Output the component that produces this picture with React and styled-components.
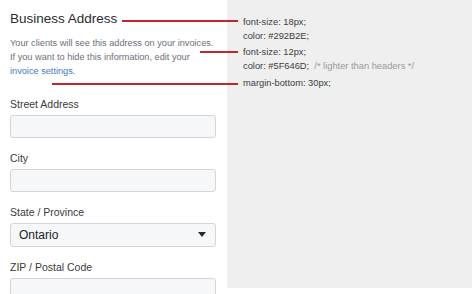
import styled, { createGlobalStyle } from "styled-components"

const GlobalStyle = createGlobalStyle`
  body {
    margin: 0;
    background: #ffffff;
    font-family: "Liberation Sans", Arial, sans-serif;
  }
`

const Page = styled.div`
  display: grid;
  grid-template-columns: 227px 245px;
  height: 294px;
  overflow: hidden;
`

const Form = styled.div`
  padding: 10px 11px 0 10px;
`

const Title = styled.h2`
  margin: 0;
  font-size: 13.5px;
  font-weight: 400;
  line-height: 18px;
  color: #292b2e;
`

const Intro = styled.p`
  margin: 8px 0 19.5px;
  font-size: 9.2px;
  line-height: 14px;
  color: #6b7079;

  a {
    color: #3f7cbf;
    text-decoration: none;
  }
`

const Field = styled.div`
  margin-bottom: 14px;
`

const Label = styled.label`
  display: block;
  font-size: 10.5px;
  line-height: 13px;
  margin-bottom: 4px;
  color: #3a3a3a;
`

const Input = styled.input`
  display: block;
  box-sizing: border-box;
  width: 100%;
  height: 23px;
  margin: 0;
  padding: 0 8px;
  border: 1px solid #d3d5d8;
  border-radius: 3px;
  background: #f6f7f9;
  outline: none;
`

const SelectBox = styled.div`
  display: flex;
  align-items: center;
  justify-content: space-between;
  box-sizing: border-box;
  height: 24px;
  padding: 0 9px 0 8px;
  border: 1px solid #d3d5d8;
  border-radius: 3px;
  background: #f6f7f9;
  font-size: 12px;
  color: #222;
`

const Panel = styled.aside`
  background: #efefef;
  height: 288px;
  padding: 16.25px 0 0 16px;
  box-sizing: border-box;
`

const Note = styled.div`
  position: relative;
  margin-top: ${(p) => p.$gap || 0}px;
  font-size: 9.3px;
  line-height: 13.5px;
  color: #3d3d3d;
  white-space: pre;
`

const Comment = styled.span`
  color: #9a9a9a;
`

const Leader = styled.span`
  position: absolute;
  right: calc(100% + 5px);
  top: ${(p) => p.$top}px;
  width: ${(p) => p.$width}px;
  height: 1.5px;
  background: #c0262c;
`

const Caret = () => (
  <svg width="8" height="5" viewBox="0 0 8 5">
    <path d="M0 0h8L4 5z" fill="#2b2b2b" />
  </svg>
)

const fields = ["Street Address", "City"]

const App = () => {
  return (
    <>
      <GlobalStyle />
      <Page>
        <Form>
          <Title>Business Address</Title>
          <Intro>
            Your clients will see this address on your invoices.
            <br />
            If you want to hide this information, edit your
            <br />
            <a href="#">invoice settings</a>.
          </Intro>

          {fields.map((f) => (
            <Field key={f}>
              <Label>{f}</Label>
              <Input />
            </Field>
          ))}

          <Field>
            <Label>State / Province</Label>
            <SelectBox>
              <span>Ontario</span>
              <Caret />
            </SelectBox>
          </Field>

          <Field>
            <Label>ZIP / Postal Code</Label>
            <Input />
          </Field>
        </Form>

        <Panel>
          <Note>
            <Leader $top={4} $width={116} />
            font-size: 18px;
            <br />
            color: #292B2E;
          </Note>
          <Note $gap={3}>
            <Leader $top={5} $width={38} />
            font-size: 12px;
            <br />
            color: #5F646D;  <Comment>/* lighter than headers */</Comment>
          </Note>
          <Note $gap={4}>
            <Leader $top={6} $width={186} />
            margin-bottom: 30px;
          </Note>
        </Panel>
      </Page>
    </>
  )
}

export default App
